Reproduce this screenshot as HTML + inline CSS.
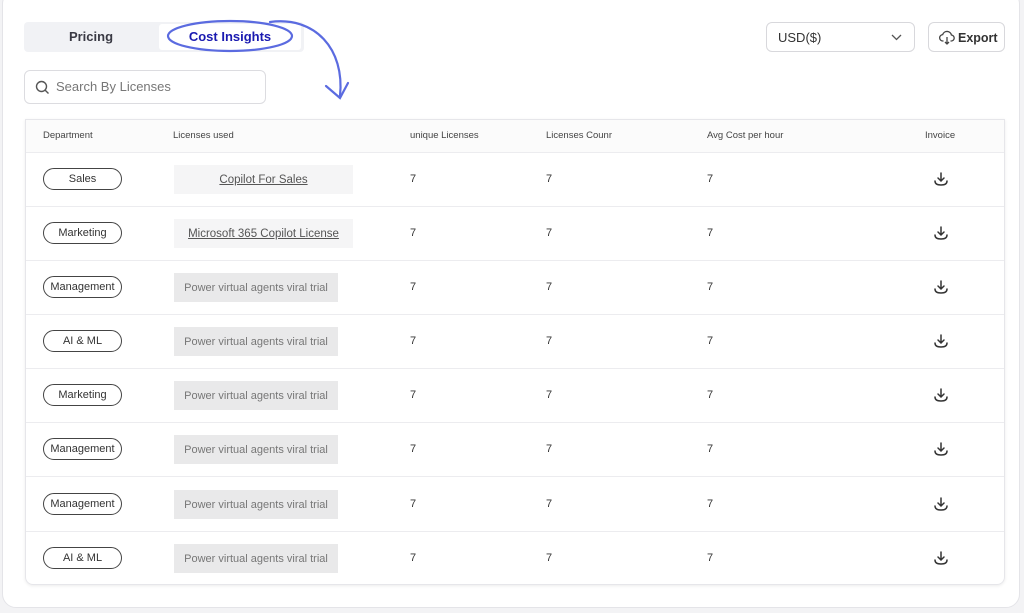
<!DOCTYPE html>
<html><head><meta charset="utf-8"><style>
*{box-sizing:border-box;margin:0;padding:0}
body{width:1024px;height:613px;background:#f3f3f5;font-family:"Liberation Sans",sans-serif;position:relative;overflow:hidden;color:#333}
.card{position:absolute;left:2px;top:-10px;width:1018px;height:618px;background:#fff;border:1px solid #e4e4e8;border-radius:14px}
.abs{position:absolute}
.tabs{left:24px;top:22px;width:280px;height:30px;background:#f1f2f5;border-radius:4px}
.tab1{left:24px;top:22px;width:134px;height:30px;line-height:30px;text-align:center;font-weight:bold;font-size:13px;color:#3a3a44}
.tab2{left:159px;top:24px;width:142px;height:26px;background:#fff;border-radius:3px}
.ci{left:159px;top:22px;width:142px;height:30px;line-height:30px;text-align:center;font-weight:bold;font-size:13px;color:#1a1ab0}
.search{left:24px;top:70px;width:242px;height:34px;border:1.5px solid #dcdce0;border-radius:6px}
.search span{position:absolute;left:31px;top:8px;font-size:13px;color:#777}
.sel{left:766px;top:22px;width:149px;height:30px;border:1px solid #d8d8dc;border-radius:6px;font-size:13px;color:#333}
.exp{left:928px;top:22px;width:77px;height:30px;border:1px solid #d8d8dc;border-radius:6px;font-size:12.5px;font-weight:bold;color:#333}
.table{left:25px;top:119px;width:980px;height:466px;border:1px solid #e6e6ea;border-radius:0 0 8px 8px;box-shadow:0 1px 3px rgba(0,0,0,.08)}
.hdr{position:absolute;left:0;top:0;width:100%;height:33px;background:#fbfbfb;border-bottom:1px solid #ececef}
.hdr span{position:absolute;top:10px;font-size:9.5px;color:#444}
.row{position:absolute;left:0;width:100%;height:54px;border-bottom:1px solid #ececef}
.pill{position:absolute;left:17px;top:15px;width:79px;height:22px;border:1.5px solid #444;border-radius:11px;display:flex;align-items:center;justify-content:center;font-size:11px;color:#333}
.chip{position:absolute;left:148px;top:12px;height:29px;display:flex;align-items:center;justify-content:center;font-size:11px}
.c1{width:179px;background:#f5f5f6;color:#555;text-decoration:underline;font-size:11.5px}
.c2{width:164px;background:#e9e9ea;color:#777}
.n{position:absolute;top:20px;font-size:11px;color:#333}
.dl{position:absolute;left:907px;top:18px}
</style></head><body>
<div class="card"></div>
<div class="abs tabs"></div>
<div class="abs tab2"></div>
<div class="abs tab1">Pricing</div>
<div class="abs ci">Cost Insights</div>
<svg class="abs" style="left:160px;top:14px" width="200" height="90" viewBox="0 0 200 90" fill="none" stroke="#5b6be0" stroke-width="2.2" stroke-linecap="round">
<ellipse cx="70" cy="22" rx="62" ry="15"/>
<path d="M110 8 C155 2 185 35 180 82"/>
<path d="M166 72 L180 84 L188 69"/>
</svg>
<div class="abs search"><svg style="position:absolute;left:10px;top:9px" width="15" height="15" viewBox="0 0 15 15" fill="none" stroke="#555" stroke-width="1.4"><circle cx="6.5" cy="6.5" r="5"/><path d="M10.2 10.2L13.5 13.5"/></svg><span>Search By Licenses</span></div>
<div class="abs sel"><span style="position:absolute;left:11px;top:7px">USD($)</span><svg style="position:absolute;left:124px;top:11px" width="11" height="7" viewBox="0 0 11 7" fill="none" stroke="#555" stroke-width="1.3"><path d="M1 1l4.5 4.5L10 1"/></svg></div>
<div class="abs exp"><svg style="position:absolute;left:10px;top:7px" width="16" height="15" viewBox="0 0 16 15" fill="none" stroke="#444" stroke-width="1.3"><path d="M4.5 11H4a3.2 3.2 0 0 1-.3-6.4A4.5 4.5 0 0 1 12.4 5 3 3 0 0 1 12 11h-.5"/><path d="M8 7v7M6 12l2 2 2-2"/></svg><span style="position:absolute;left:29px;top:8px">Export</span></div>
<div class="abs table">
<div class="hdr"><span style="left:17px">Department</span><span style="left:147px">Licenses used</span><span style="left:384px">unique Licenses</span><span style="left:520px">Licenses Counr</span><span style="left:681px">Avg Cost per hour</span><span style="left:899px">Invoice</span></div>
<div style="position:absolute;left:0;top:33px;width:100%">
<div class="row" style="top:0"><div class="pill">Sales</div><div class="chip c1">Copilot For Sales</div><span class="n" style="left:384px">7</span><span class="n" style="left:520px">7</span><span class="n" style="left:681px">7</span><svg class="dl" width="16" height="16" viewBox="0 0 16 16" fill="none" stroke="#333" stroke-width="1.5" stroke-linecap="round"><path d="M8 2v8M5 7l3 3 3-3M2 10c0 3 2.5 4 6 4s6-1 6-4"/></svg></div>
<div class="row" style="top:54px"><div class="pill">Marketing</div><div class="chip c1">Microsoft 365 Copilot License</div><span class="n" style="left:384px">7</span><span class="n" style="left:520px">7</span><span class="n" style="left:681px">7</span><svg class="dl" width="16" height="16" viewBox="0 0 16 16" fill="none" stroke="#333" stroke-width="1.5" stroke-linecap="round"><path d="M8 2v8M5 7l3 3 3-3M2 10c0 3 2.5 4 6 4s6-1 6-4"/></svg></div>
<div class="row" style="top:108px"><div class="pill">Management</div><div class="chip c2">Power virtual agents viral trial</div><span class="n" style="left:384px">7</span><span class="n" style="left:520px">7</span><span class="n" style="left:681px">7</span><svg class="dl" width="16" height="16" viewBox="0 0 16 16" fill="none" stroke="#333" stroke-width="1.5" stroke-linecap="round"><path d="M8 2v8M5 7l3 3 3-3M2 10c0 3 2.5 4 6 4s6-1 6-4"/></svg></div>
<div class="row" style="top:162px"><div class="pill">AI &amp; ML</div><div class="chip c2">Power virtual agents viral trial</div><span class="n" style="left:384px">7</span><span class="n" style="left:520px">7</span><span class="n" style="left:681px">7</span><svg class="dl" width="16" height="16" viewBox="0 0 16 16" fill="none" stroke="#333" stroke-width="1.5" stroke-linecap="round"><path d="M8 2v8M5 7l3 3 3-3M2 10c0 3 2.5 4 6 4s6-1 6-4"/></svg></div>
<div class="row" style="top:216px"><div class="pill">Marketing</div><div class="chip c2">Power virtual agents viral trial</div><span class="n" style="left:384px">7</span><span class="n" style="left:520px">7</span><span class="n" style="left:681px">7</span><svg class="dl" width="16" height="16" viewBox="0 0 16 16" fill="none" stroke="#333" stroke-width="1.5" stroke-linecap="round"><path d="M8 2v8M5 7l3 3 3-3M2 10c0 3 2.5 4 6 4s6-1 6-4"/></svg></div>
<div class="row" style="top:270px"><div class="pill">Management</div><div class="chip c2">Power virtual agents viral trial</div><span class="n" style="left:384px">7</span><span class="n" style="left:520px">7</span><span class="n" style="left:681px">7</span><svg class="dl" width="16" height="16" viewBox="0 0 16 16" fill="none" stroke="#333" stroke-width="1.5" stroke-linecap="round"><path d="M8 2v8M5 7l3 3 3-3M2 10c0 3 2.5 4 6 4s6-1 6-4"/></svg></div>
<div class="row" style="top:325px"><div class="pill">Management</div><div class="chip c2">Power virtual agents viral trial</div><span class="n" style="left:384px">7</span><span class="n" style="left:520px">7</span><span class="n" style="left:681px">7</span><svg class="dl" width="16" height="16" viewBox="0 0 16 16" fill="none" stroke="#333" stroke-width="1.5" stroke-linecap="round"><path d="M8 2v8M5 7l3 3 3-3M2 10c0 3 2.5 4 6 4s6-1 6-4"/></svg></div>
<div class="row" style="top:379px;border-bottom:none"><div class="pill">AI &amp; ML</div><div class="chip c2">Power virtual agents viral trial</div><span class="n" style="left:384px">7</span><span class="n" style="left:520px">7</span><span class="n" style="left:681px">7</span><svg class="dl" width="16" height="16" viewBox="0 0 16 16" fill="none" stroke="#333" stroke-width="1.5" stroke-linecap="round"><path d="M8 2v8M5 7l3 3 3-3M2 10c0 3 2.5 4 6 4s6-1 6-4"/></svg></div>
</div>
</div>
</body></html>
